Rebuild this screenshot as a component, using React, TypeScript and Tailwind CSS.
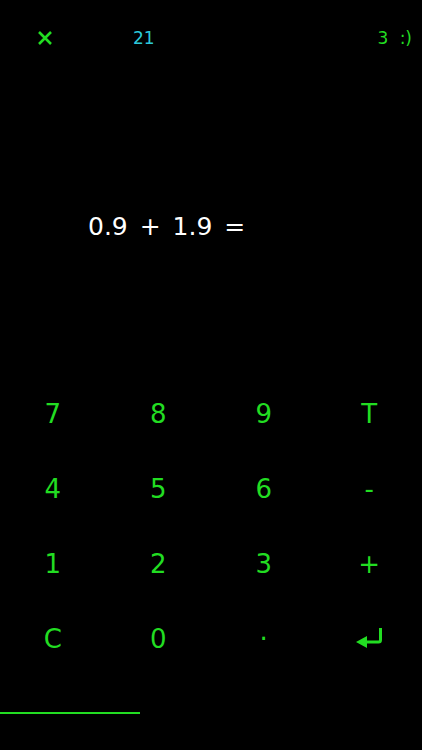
import React from 'react'

const keys = ['7', '8', '9', 'T', '4', '5', '6', '-', '1', '2', '3', '+', 'C', '0', '·', 'enter']

function EnterIcon() {
  return (
    <svg width="28" height="24" viewBox="0 0 28 24" fill="none">
      <path d="M25.5 1 V13 Q25.5 15 23.5 15 H11" stroke="#22dd22" strokeWidth="3" strokeLinecap="butt" />
      <path d="M1 15 L12 9 L12 21 Z" fill="#22dd22" />
    </svg>
  )
}

export default function App() {
  return (
    <main
      className="h-[750px] w-full bg-black flex flex-col overflow-hidden"
      style={{ fontFamily: '"DejaVu Sans", Verdana, sans-serif' }}
    >
      {/* Header */}
      <div className="h-[76px] flex items-center pl-[37px] pr-[10px]">
        <svg width="16" height="16" viewBox="0 0 16 16" className="shrink-0">
          <path d="M2 2 L14 14 M14 2 L2 14" stroke="#22dd22" strokeWidth="2.6" />
        </svg>
        <span className="ml-[80px] text-[17px] text-[#2cc8d8] leading-none">21</span>
        <span className="ml-auto text-[17px] text-[#22dd22] leading-none [word-spacing:6px]">3 :)</span>
      </div>

      {/* Question */}
      <div className="h-[300px] flex items-center pl-[88px] pt-[1px]">
        <span className="text-white text-[25px] leading-none [word-spacing:4px]">0.9 + 1.9 =</span>
      </div>

      {/* Keypad */}
      <div className="grid grid-cols-4">
        {keys.map((k) => (
          <div key={k} className="h-[75px] flex items-center justify-center text-[26px] text-[#22dd22] leading-none">
            {k === 'enter' ? <EnterIcon /> : k}
          </div>
        ))}
      </div>

      {/* Progress */}
      <div className="mt-[36px] h-[2px] w-[140px] bg-[#22dd22]" />
    </main>
  )
}
